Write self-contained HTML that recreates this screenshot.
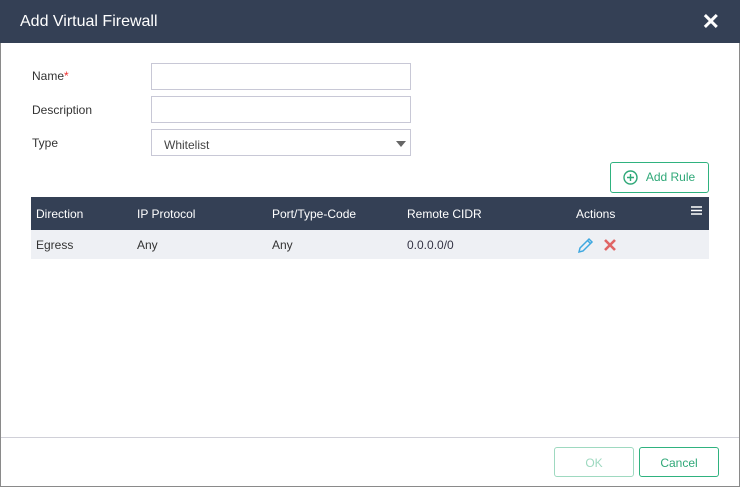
<!DOCTYPE html>
<html><head><style>
*{box-sizing:border-box;margin:0;padding:0}
body{width:740px;height:487px;background:#fff;font-family:"Liberation Sans",sans-serif;font-size:12px;color:#333;position:relative;overflow:hidden}
.frame{position:absolute;left:0;top:0;width:740px;height:487px;border:1px solid #8a8a8a;border-top:none}
.hdr{position:absolute;left:0;top:0;width:740px;height:43px;background:#344055;color:#fff;font-size:16px;line-height:43px;padding-left:20px}
.x{position:absolute;right:20px;top:0;font-size:22px;font-weight:bold}
.lbl{position:absolute;left:32px;font-size:12px;color:#333}
.inp{position:absolute;left:151px;width:260px;height:27px;border:1px solid #c8c8d6;background:#fff}
.btn{position:absolute;border:1px solid #2fb27f;border-radius:3px;color:#2fa878;font-size:12px;text-align:center}
.th{position:absolute;left:31px;top:197px;width:678px;height:33px;background:#344055;color:#fff}
.tr{position:absolute;left:31px;top:230px;width:678px;height:29px;background:#eef0f4}
.c{position:absolute;line-height:33px;top:1px}
.tr .c{line-height:29px;top:1px}
</style></head><body>
<div class="frame"></div>
<div class="hdr">Add Virtual Firewall<span class="x">✕</span></div>
<div class="lbl" style="top:69px">Name<span style="color:#e33">*</span></div>
<div class="lbl" style="top:103px">Description</div>
<div class="lbl" style="top:136px">Type</div>
<div class="inp" style="top:63px"></div>
<div class="inp" style="top:96px"></div>
<div class="inp" style="top:129px;padding:8px 0 0 12px;color:#444">Whitelist<span style="position:absolute;right:4px;top:11px;border:5px solid transparent;border-top:6px solid #666;border-bottom:0"></span></div>
<div class="btn" style="left:610px;top:162px;width:99px;height:31px;line-height:29px;padding-left:22px">Add Rule
<svg style="position:absolute;left:12px;top:7px" width="15" height="15" viewBox="0 0 15 15"><circle cx="7.5" cy="7.5" r="6.5" fill="none" stroke="#2fa878" stroke-width="1.4"/><path d="M7.5 4v7M4 7.5h7" stroke="#2fa878" stroke-width="1.4"/></svg></div>
<div class="th">
<span class="c" style="left:5px">Direction</span><span class="c" style="left:106px">IP Protocol</span><span class="c" style="left:241px">Port/Type-Code</span><span class="c" style="left:376px">Remote CIDR</span><span class="c" style="left:545px">Actions</span>
<svg style="position:absolute;left:660px;top:9px" width="11" height="9"><path d="M0 1h11M0 4.5h11M0 8h11" stroke="#fff" stroke-width="1.6"/></svg>
</div>
<div class="tr">
<span class="c" style="left:5px">Egress</span><span class="c" style="left:106px">Any</span><span class="c" style="left:241px">Any</span><span class="c" style="left:376px;color:#334">0.0.0.0/0</span>
<svg style="position:absolute;left:546px;top:7px" width="18" height="17" viewBox="0 0 18 17"><path d="M2 15l1-4L12 2l3 3-9 9z" fill="none" stroke="#3fa8e0" stroke-width="1.5"/><path d="M10.5 3.5l3 3" stroke="#3fa8e0" stroke-width="1.5"/></svg>
<svg style="position:absolute;left:572px;top:8px" width="14" height="14"><path d="M2 2l10 10M12 2L2 12" stroke="#e06565" stroke-width="2.6"/></svg>
</div>
<div style="position:absolute;left:1px;top:437px;width:738px;height:1px;background:#d0d0d8"></div>
<div class="btn" style="left:554px;top:447px;width:80px;height:30px;line-height:30px;border-color:#9ed9c0;color:#9ed9c0">OK</div>
<div class="btn" style="left:639px;top:447px;width:80px;height:30px;line-height:30px">Cancel</div>
</body></html>
